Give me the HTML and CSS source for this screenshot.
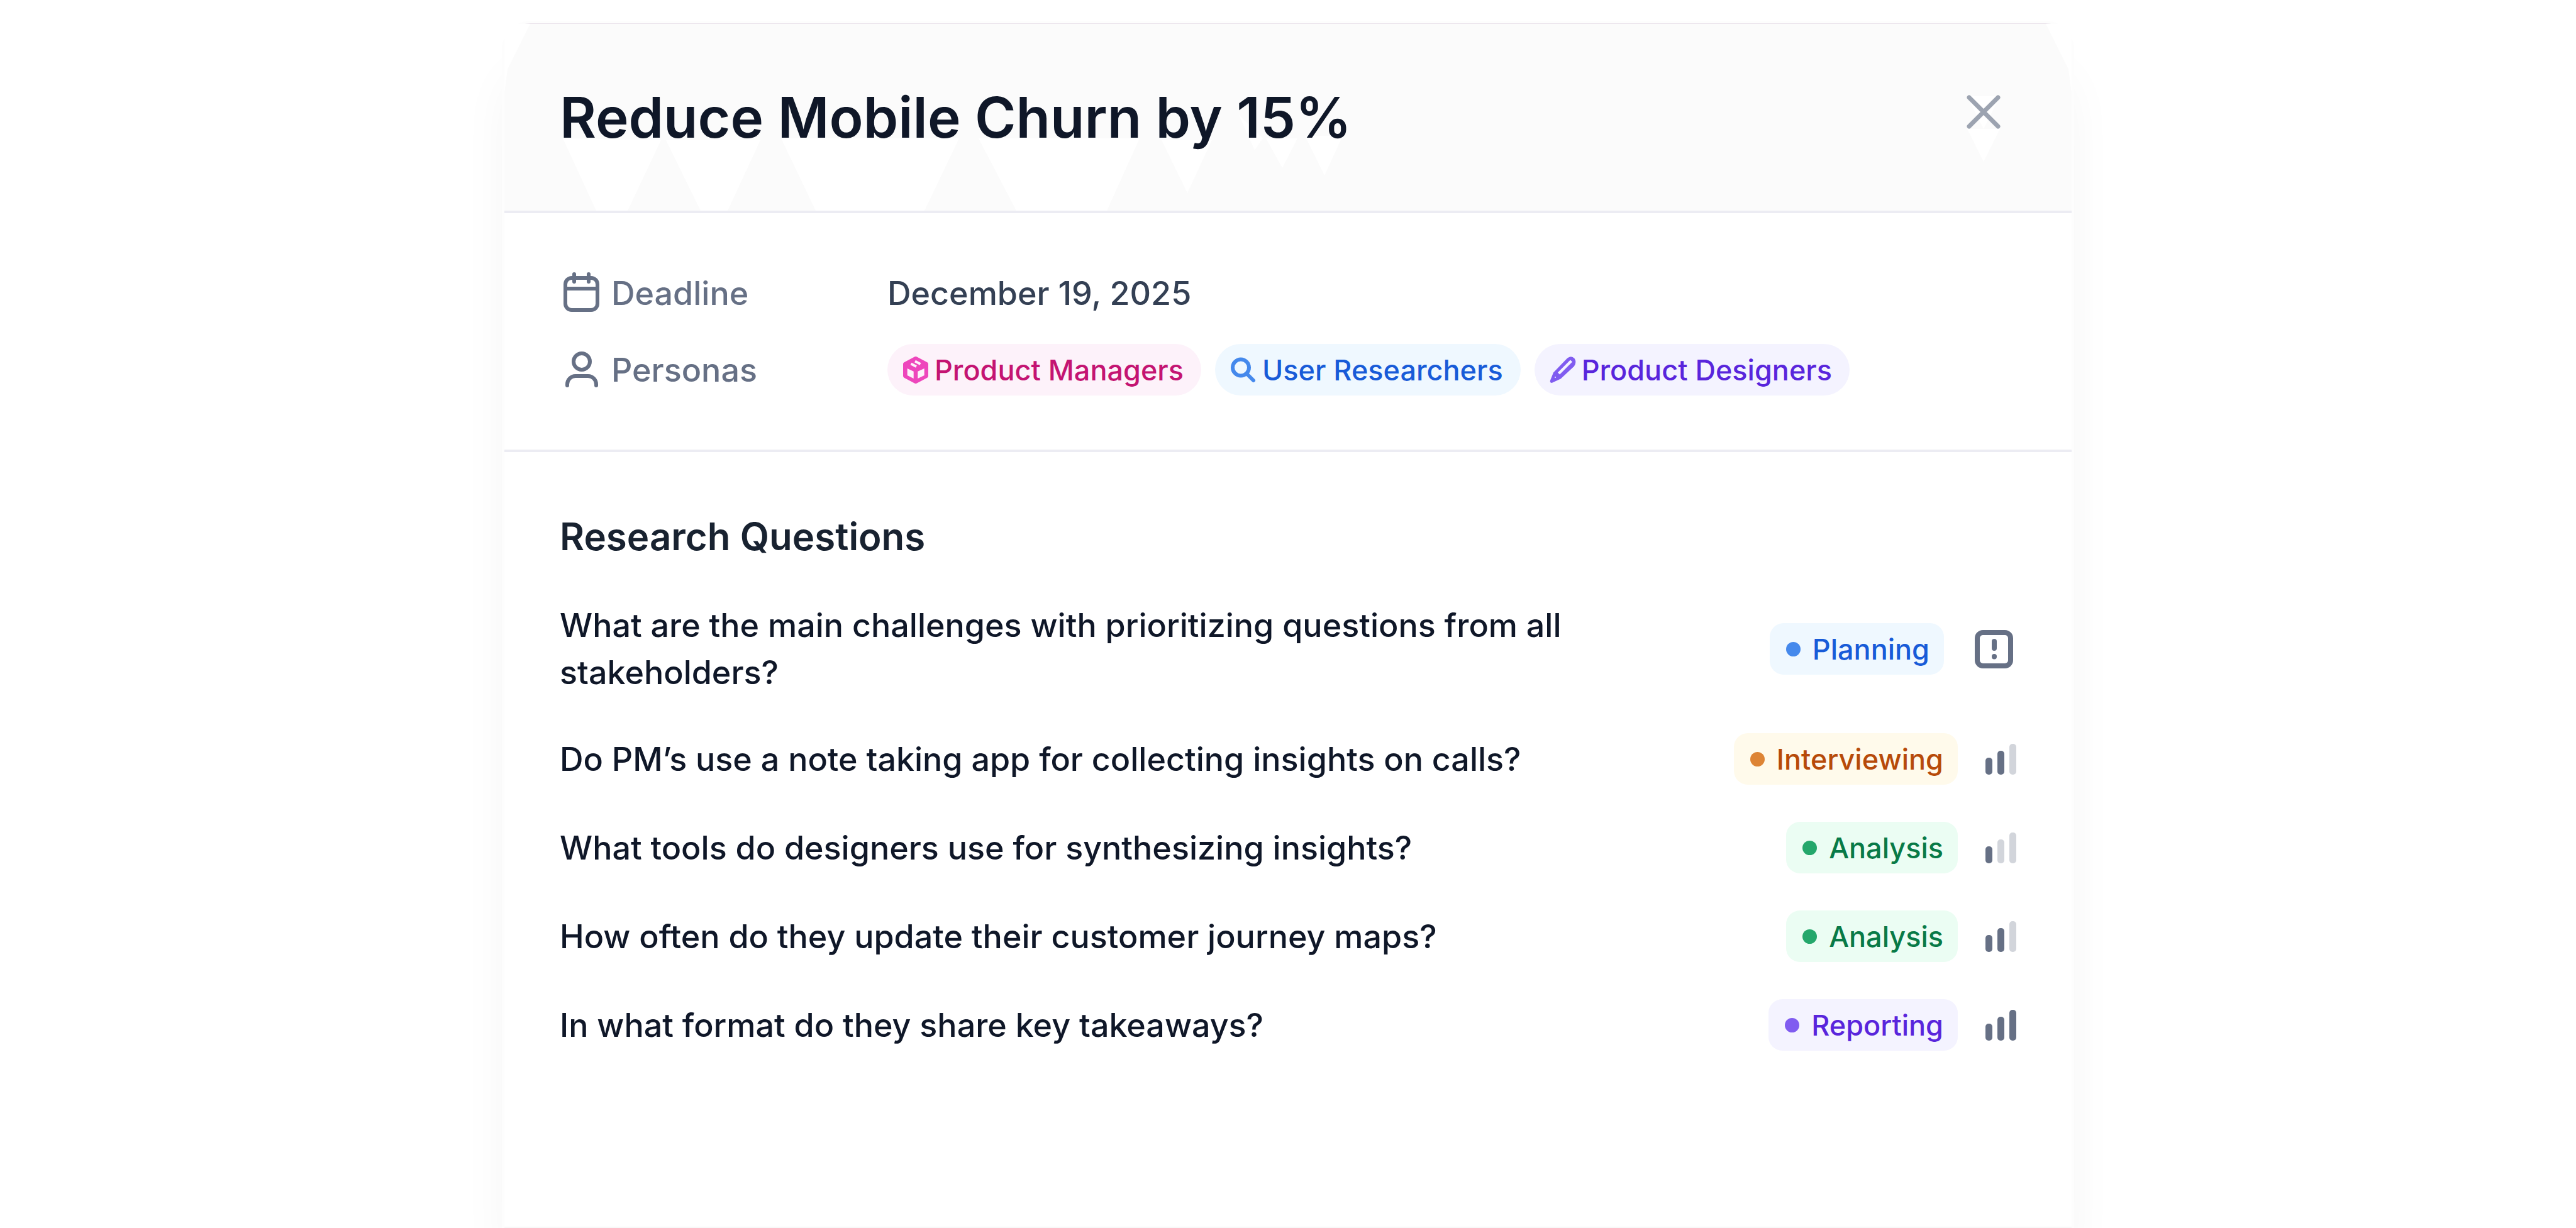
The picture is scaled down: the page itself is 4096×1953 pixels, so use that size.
FILE: index.html
```
<!DOCTYPE html>
<html lang="en">
<head>
    <meta charset="utf-8">
    <title>Reduce Mobile Churn by 15%</title>
    <link rel="stylesheet" href="styles.css">
</head>
<body>
    <main class="card">
        <header class="card-header">
            <svg class="header-pattern" viewBox="0 0 2492 297" preserveAspectRatio="none" aria-hidden="true">
                <path d="M0 0H41L5 72L0 110Z M2492 0H2451L2487 72L2492 110Z"/>
                <path d="M93 182L146 297H196L249 185Z M257 185L312 297H355L407 185Z"/>
                <path d="M440 182L495 297H668L723 182Z M754 182L814 297H958L1010 182Z"/>
                <path d="M1045 185L1086 269L1125 185Z M1168 145L1193 201L1206 182Z"/>
                <path d="M1211 182L1237 229L1261 182Z M1273 178L1304 241L1333 178Z"/>
                <path d="M2326 115H2378L2352 167Z M2326 167H2378L2352 219Z"/>
            </svg>
            <h1 class="title">Reduce Mobile Churn by 15%</h1>
            <button class="close" type="button" aria-label="Close">
                <svg width="60" height="60" viewBox="0 0 60 60" fill="none" stroke="currentColor" stroke-width="7" stroke-linecap="round"><path d="M7 7L53 53M53 7L7 53"/></svg>
            </button>
        </header>

        <dl class="meta">
            <dt class="meta-label">
                <svg width="70" height="68" viewBox="-1 0 70 68" fill="none" stroke="currentColor" stroke-width="6" stroke-linecap="round"><rect x="8" y="10" width="51" height="51" rx="10"/><path d="M8 27H59M22 4V16M45 4V16"/></svg>
                Deadline
            </dt>
            <dd class="meta-value">December 19, 2025</dd>
            <dt class="meta-label">
                <svg width="70" height="68" viewBox="-1 0 70 68" fill="none" stroke="currentColor" stroke-width="6" stroke-linecap="round"><circle cx="34" cy="21" r="13"/><path d="M11 59V57A13 13 0 0 1 24 44H44A13 13 0 0 1 57 57V59"/></svg>
                Personas
            </dt>
            <dd class="meta-value chips">
                <span class="chip pink">
                    <svg width="46" height="46" viewBox="0 0 46 46" fill="currentColor"><path d="M23 5L40 14V33L23 42L6 33V14Z" stroke="currentColor" stroke-width="6" stroke-linejoin="round"/><path class="cutout" d="M9.7 21L19.7 25.7V37L9.7 32Z M36.7 21L26.3 25.7V37L36.7 32Z"/><path class="cutout-line" d="M15.5 13.5L24 18M22 9.5L30.5 14" stroke-width="4"/></svg>
                    Product Managers
                </span>
                <span class="chip blue">
                    <svg width="46" height="46" viewBox="0 0 46 46" fill="none" stroke="currentColor" stroke-width="6" stroke-linecap="round"><circle cx="19" cy="19.5" r="13"/><path d="M29 30L39 40"/></svg>
                    User Researchers
                </span>
                <span class="chip purple">
                    <svg width="46" height="46" viewBox="0 0 46 46" fill="currentColor"><path d="M3 40L8 27.5L30 4.8Q36 -0.5 41.5 5Q45.5 11 41 17.5L19.5 37.5L6 43.8Q2 44.5 3 40Z"/><path class="cutout-line" d="M16.5 29L36.5 9" stroke-width="4.5"/><circle class="cutout" cx="11" cy="35" r="1"/></svg>
                    Product Designers
                </span>
            </dd>
        </dl>

        <section class="questions">
            <h2 class="subtitle">Research Questions</h2>
            <ul class="question-list">
                <li class="question">
                    <p class="question-text">What are the main challenges with prioritizing questions from all stakeholders?</p>
                    <span class="badge blue">Planning</span>
                    <svg width="77" height="68" viewBox="0 0 77 68" fill="none" stroke="currentColor" stroke-width="8" stroke-linecap="round" role="img" aria-label="Urgent"><rect x="15" y="8" width="53" height="53" rx="9"/><path d="M42 22V33M42 46V46.5"/></svg>
                </li>
                <li class="question">
                    <p class="question-text">Do PM’s use a note taking app for collecting insights on calls?</p>
                    <span class="badge orange">Interviewing</span>
                    <svg class="bars medium" width="55" height="56" viewBox="0 0 55 56" role="img" aria-label="Medium"><rect x="6" y="26" width="11" height="27" rx="5"/><rect x="25" y="15" width="11" height="38" rx="5"/><rect x="44" y="4" width="11" height="49" rx="5"/></svg>
                </li>
                <li class="question">
                    <p class="question-text">What tools do designers use for synthesizing insights?</p>
                    <span class="badge green">Analysis</span>
                    <svg class="bars low" width="55" height="56" viewBox="0 0 55 56" role="img" aria-label="Low"><rect x="6" y="26" width="11" height="27" rx="5"/><rect x="25" y="15" width="11" height="38" rx="5"/><rect x="44" y="4" width="11" height="49" rx="5"/></svg>
                </li>
                <li class="question">
                    <p class="question-text">How often do they update their customer journey maps?</p>
                    <span class="badge green">Analysis</span>
                    <svg class="bars medium" width="55" height="56" viewBox="0 0 55 56" role="img" aria-label="Medium"><rect x="6" y="26" width="11" height="27" rx="5"/><rect x="25" y="15" width="11" height="38" rx="5"/><rect x="44" y="4" width="11" height="49" rx="5"/></svg>
                </li>
                <li class="question">
                    <p class="question-text">In what format do they share key takeaways?</p>
                    <span class="badge purple">Reporting</span>
                    <svg class="bars" width="55" height="56" viewBox="0 0 55 56" role="img" aria-label="High"><rect x="6" y="26" width="11" height="27" rx="5"/><rect x="25" y="15" width="11" height="38" rx="5"/><rect x="44" y="4" width="11" height="49" rx="5"/></svg>
                </li>
            </ul>
        </section>
    </main>
</body>
</html>
```
FILE: styles.css
```
* {
    box-sizing: border-box;
}
body {
    display: flex;
    justify-content: center;
    min-height: 100vh;
    margin: 0;
    padding: 37px 0 1px;
    background: #fff;
    font-family: Inter, sans-serif;
    font-size: 52px;
    font-weight: 500;
    line-height: 75px;
    color: #0f1728;
}
h1, h2, p, ul, dl, dd {
    margin: 0;
    padding: 0;
}
svg {
    flex: none;
}
.card {
    width: 100%;
    max-width: 2492px;
    border-top: 1px solid #ebe4ec;
    border-bottom: 1px solid #ebebeb;
    border-radius: 42px 42px 0 0;
    background: #fff;
    box-shadow: 0 0 0 4px #fdfdfd, 0 75px 90px -15px rgba(0, 0, 0, 0.06);
}
.card-header {
    position: relative;
    display: flex;
    align-items: flex-start;
    justify-content: space-between;
    padding: 88px;
    border-bottom: 4px solid #ececf3;
    border-radius: 42px 42px 0 0;
    background: #fbfbfb;
}
.header-pattern {
    position: absolute;
    inset: 0;
    width: 100%;
    height: 100%;
    fill: #fff;
}
.title {
    position: relative;
    font-size: 89px;
    font-weight: 600;
    line-height: 121px;
}
.close {
    position: relative;
    display: flex;
    align-items: center;
    justify-content: center;
    width: 104px;
    height: 104px;
    padding: 0;
    border: none;
    background: none;
    color: #9ca3b0;
    cursor: pointer;
}
.meta {
    display: grid;
    grid-template-columns: 521px 1fr;
    grid-auto-rows: 82px;
    row-gap: 40px;
    align-items: center;
    padding: 86px 88px;
    border-bottom: 4px solid #ececf3;
}
.meta-label {
    display: flex;
    align-items: center;
    gap: 12px;
    color: #667085;
}
.meta-value {
    color: #344054;
}
.chips {
    display: flex;
    gap: 22px;
}
.chip {
    display: flex;
    align-items: center;
    gap: 7px;
    height: 82px;
    padding: 0 28px 0 22px;
    border-radius: 41px;
    font-size: 45px;
}
.questions {
    padding: 88px;
}
.subtitle {
    margin-bottom: 58px;
    font-size: 60px;
    font-weight: 600;
    line-height: 92px;
    color: #182230;
}
.question-list {
    display: flex;
    flex-direction: column;
    gap: 59px;
    list-style: none;
}
.question {
    display: flex;
    align-items: center;
    gap: 38px;
    min-height: 82px;
    color: #667085;
}
.question-text {
    flex: 1;
    color: #0f1728;
}
.badge {
    display: flex;
    align-items: center;
    gap: 19px;
    height: 82px;
    padding: 0 23px 0 26px;
    border-radius: 22px;
    font-size: 45px;
}
.badge::before {
    content: "";
    width: 23px;
    height: 23px;
    border-radius: 50%;
    background: currentColor;
}
.pink {
    background: #fdf2fa;
    color: #c41472;
}
.pink svg {
    color: #ee46bc;
}
.pink .cutout {
    fill: #fdf2fa;
}
.pink .cutout-line {
    stroke: #fdf2fa;
}
.blue {
    background: #eff8ff;
    color: #185bd8;
}
.blue svg {
    color: #4589ec;
}
.blue::before {
    background: #4589ec;
}
.purple {
    background: #f4f3ff;
    color: #5925dc;
}
.purple svg {
    color: #805cf0;
}
.purple .cutout {
    fill: #f4f3ff;
}
.purple .cutout-line {
    stroke: #f4f3ff;
}
.purple::before {
    background: #805cf0;
}
.orange {
    background: #fffaeb;
    color: #b74a09;
}
.orange::before {
    background: #dd8435;
}
.green {
    background: #ebfdf3;
    color: #087a47;
}
.green::before {
    background: #24a76b;
}
.bars {
    fill: #667085;
}
.medium rect:nth-child(3),
.low rect:nth-child(n + 2) {
    fill: #d2d5db;
}
```
